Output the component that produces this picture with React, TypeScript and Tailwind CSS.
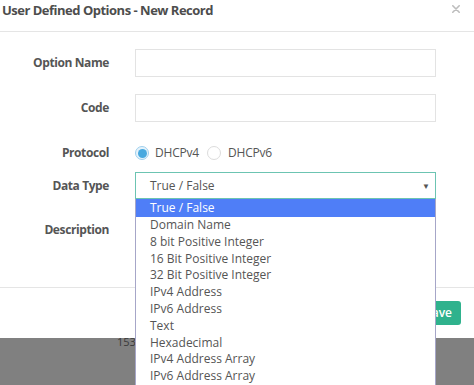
const dataTypes = [
  "True / False",
  "Domain Name",
  "8 bit Positive Integer",
  "16 Bit Positive Integer",
  "32 Bit Positive Integer",
  "IPv4 Address",
  "IPv6 Address",
  "Text",
  "Hexadecimal",
  "IPv4 Address Array",
  "IPv6 Address Array",
];

function Label({ children }: { children: React.ReactNode }) {
  return (
    <div className="w-[110px] shrink-0 pr-[1px] text-right text-[12px] font-bold tracking-[-0.4px] text-[#555]">
      {children}
    </div>
  );
}

export default function App() {
  return (
    <div
      className="relative flex h-[385px] w-[474px] flex-col overflow-hidden bg-white"
      style={{ fontFamily: '"Open Sans", "Liberation Sans", sans-serif' }}
    >
      {/* Header */}
      <div className="flex h-[32px] shrink-0 items-start border-b border-[#e5e5e5] pl-[2px]">
        <h4 className="mt-[1px] text-[13px] leading-[19px] font-bold tracking-[-0.5px] text-[#4d4d4d]">
          User Defined Options - New Record
        </h4>
        <svg viewBox="0 0 10 10" className="ml-auto mr-[14px] mt-[5px] h-[8px] w-[8px]">
          <path d="M1 1 L9 9 M9 1 L1 9" stroke="#bdbdbd" strokeWidth="2" strokeLinecap="round" />
        </svg>
      </div>

      {/* Body */}
      <div className="flex flex-col pb-[13px]">
        <div className="mt-[17px] flex h-[28px] items-center gap-[25px]">
          <Label>Option Name</Label>
          <div className="h-[28px] w-[301px] border border-[#e3e3e3]" />
        </div>
        <div className="mt-[17px] flex h-[28px] items-center gap-[25px]">
          <Label>Code</Label>
          <div className="h-[28px] w-[301px] border border-[#e3e3e3]" />
        </div>
        <div className="mt-[17px] flex h-[28px] items-center gap-[25px]">
          <Label>Protocol</Label>
          <div className="flex items-center text-[12px] text-[#555]">
            <span className="flex h-[14px] w-[14px] items-center justify-center rounded-full border border-[#9fd0ee] bg-[#e6f3fb]">
              <span className="h-[9px] w-[9px] rounded-full bg-[#48a9df]" />
            </span>
            <span className="ml-[6px] tracking-[-0.2px]">DHCPv4</span>
            <span className="ml-[8px] h-[14px] w-[14px] rounded-full border border-[#dcdcdc]" />
            <span className="ml-[7px] tracking-[-0.2px]">DHCPv6</span>
          </div>
        </div>
        <div className="mt-[5px] flex h-[27px] items-center gap-[25px]">
          <Label>Data Type</Label>
          <div className="flex h-[27px] w-[301px] items-center justify-between border border-[#6cc4b2] pl-[14px] pr-[5px] text-[12px] text-[#555]">
            <span>True / False</span>
            <span className="text-[8px] text-[#555]">▼</span>
          </div>
        </div>
        <div className="mt-[17px] flex items-start gap-[25px]">
          <div className="pt-[5px] leading-[17px]">
            <Label>Description</Label>
          </div>
          <div className="h-[58px] w-[301px] border border-[#e3e3e3]" />
        </div>
      </div>

      {/* Footer */}
      <div className="flex h-[51px] shrink-0 items-start justify-end border-t border-[#e5e5e5] pt-[13px] pr-[13px]">
        <button className="h-[24px] rounded-[3px] bg-[#2fb28d] px-[9px] text-[12px] font-semibold text-white">
          Save
        </button>
      </div>

      {/* Page behind modal */}
      <div className="flex flex-1 bg-[#808080] pl-[117px]">
        <span className="-mt-[3px] text-[11px] leading-[14px] text-[#3a3a3a]">153</span>
      </div>

      {/* Open select list */}
      <ul className="absolute left-[135px] top-[199px] w-[301px] border border-t-0 border-[#a6a6c8] bg-white text-[12px] text-[#555]">
        {dataTypes.map((t, i) => (
          <li
            key={t}
            className={
              i === 0
                ? "h-[18px] bg-[#4f7ef7] pl-[14px] leading-[18px] text-white"
                : "h-[16.8px] pl-[14px] leading-[16.8px]"
            }
          >
            {t}
          </li>
        ))}
      </ul>
    </div>
  );
}
